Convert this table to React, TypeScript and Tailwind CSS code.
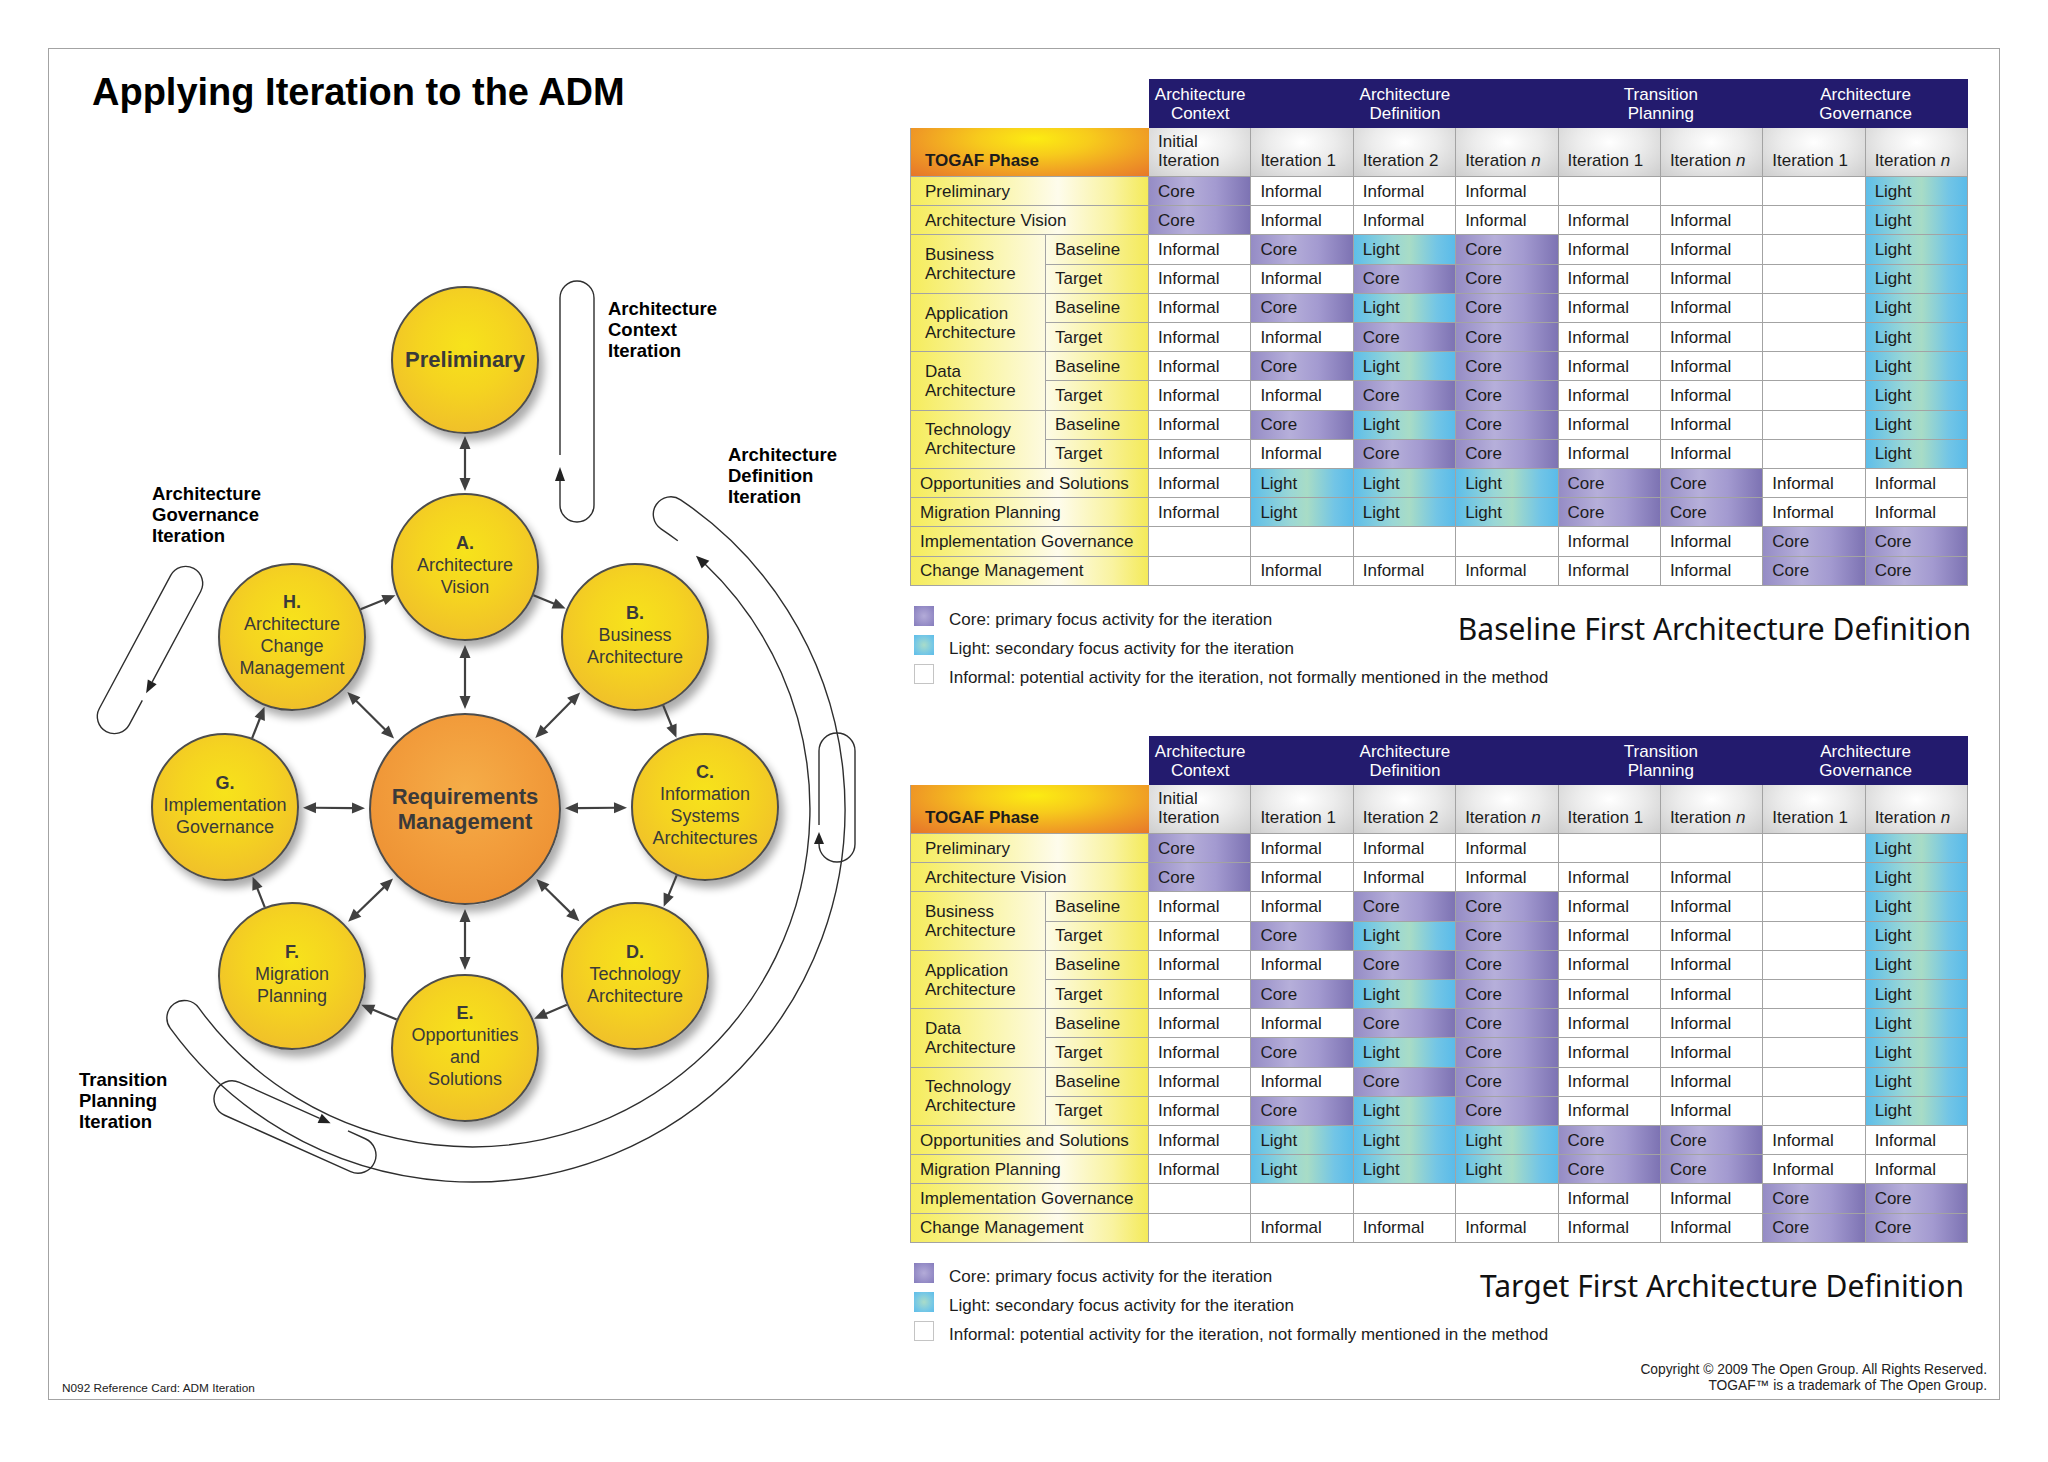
import React from 'react';

type V = 'C' | 'L' | 'I' | '';

const CELL_BG: Record<V, string> = {
  C: 'bg-[linear-gradient(to_right,#958cc5_0%,#b6afda_38%,#a39ad0_66%,#7d73b3_100%)]',
  L: 'bg-[linear-gradient(to_right,#5ebee9_0%,#9ad7d6_38%,#a8dcc6_55%,#72c5e6_82%,#5abbe9_100%)]',
  I: 'bg-white',
  '': 'bg-white',
};
const CELL_TEXT: Record<V, string> = { C: 'Core', L: 'Light', I: 'Informal', '': '' };

const archBase: V[] = ['I', 'C', 'L', 'C', 'I', 'I', '', 'L'];
const archTarget: V[] = ['I', 'I', 'C', 'C', 'I', 'I', '', 'L'];

const head2: V[][] = [
  ['C', 'I', 'I', 'I', '', '', '', 'L'],
  ['C', 'I', 'I', 'I', 'I', 'I', '', 'L'],
];
const tail4: V[][] = [
  ['I', 'L', 'L', 'L', 'C', 'C', 'I', 'I'],
  ['I', 'L', 'L', 'L', 'C', 'C', 'I', 'I'],
  ['', '', '', '', 'I', 'I', 'C', 'C'],
  ['', 'I', 'I', 'I', 'I', 'I', 'C', 'C'],
];

// baseline first: baseline rows get the early core
const baselineFirst: V[][] = [
  ...head2,
  archBase, archTarget, archBase, archTarget, archBase, archTarget, archBase, archTarget,
  ...tail4,
];
// target first: the other way round
const targetFirst: V[][] = [
  ...head2,
  archTarget, archBase, archTarget, archBase, archTarget, archBase, archTarget, archBase,
  ...tail4,
];

type Phase =
  | { kind: 'single'; name: string; pl: string }
  | { kind: 'group'; name: [string, string] };

const PHASES: Phase[] = [
  { kind: 'single', name: 'Preliminary', pl: 'pl-[14px]' },
  { kind: 'single', name: 'Architecture Vision', pl: 'pl-[14px]' },
  { kind: 'group', name: ['Business', 'Architecture'] },
  { kind: 'group', name: ['Application', 'Architecture'] },
  { kind: 'group', name: ['Data', 'Architecture'] },
  { kind: 'group', name: ['Technology', 'Architecture'] },
  { kind: 'single', name: 'Opportunities and Solutions', pl: 'pl-[9px]' },
  { kind: 'single', name: 'Migration Planning', pl: 'pl-[9px]' },
  { kind: 'single', name: 'Implementation Governance', pl: 'pl-[9px]' },
  { kind: 'single', name: 'Change Management', pl: 'pl-[9px]' },
];

const HEAD = [
  { a: 'Architecture', b: 'Context', span: 'col-span-1' },
  { a: 'Architecture', b: 'Definition', span: 'col-span-3' },
  { a: 'Transition', b: 'Planning', span: 'col-span-2' },
  { a: 'Architecture', b: 'Governance', span: 'col-span-2' },
];

const ITER: React.ReactNode[] = [
  <>Initial<br />Iteration</>,
  'Iteration 1',
  'Iteration 2',
  <>Iteration <i>n</i></>,
  'Iteration 1',
  <>Iteration <i>n</i></>,
  'Iteration 1',
  <>Iteration <i>n</i></>,
];

const LINE = 'border-[#a3a3a3]';

function Matrix({ values }: { values: V[][] }) {
  const out: React.ReactNode[] = [];
  out.push(<div key="blank" className="col-span-2" />);
  HEAD.forEach((h, i) => {
    out.push(
      <div
        key={'h' + i}
        className={`${h.span} bg-[#231b6e] text-white flex flex-col items-center justify-center text-center`}
      >
        <span>{h.a}</span>
        <span>{h.b}</span>
      </div>
    );
  });
  out.push(
    <div
      key="togaf"
      className={`col-span-2 border-l border-b ${LINE} flex items-end pb-[6px] pl-[14px] font-bold bg-[radial-gradient(ellipse_at_52%_22%,#fcec12_0%,#f7cb1c_32%,#ef9a25_68%,#e6742a_100%)]`}
    >
      TOGAF Phase
    </div>
  );
  ITER.forEach((it, i) => {
    out.push(
      <div
        key={'it' + i}
        className={`border-r border-b ${LINE} flex items-end pb-[6px] pl-[9px] bg-[radial-gradient(ellipse_at_50%_30%,#ffffff_0%,#ececec_45%,#cdcdcd_100%)]`}
      >
        <span>{it}</span>
      </div>
    );
  });

  const valueCells = (row: V[], r: number) =>
    row.forEach((v, c) => {
      out.push(
        <div key={`v${r}-${c}`} className={`border-r border-b ${LINE} flex items-center pl-[9px] ${CELL_BG[v]}`}>
          {CELL_TEXT[v]}
        </div>
      );
    });

  let r = 0;
  PHASES.forEach((p, pi) => {
    if (p.kind === 'single') {
      out.push(
        <div
          key={'p' + pi}
          className={`col-span-2 border-l border-r border-b ${LINE} flex items-center ${p.pl} bg-[linear-gradient(to_right,#f5ec5c_0%,#faf5a8_35%,#fefcec_62%,#f9f3a0_85%,#f4ea5a_100%)]`}
        >
          {p.name}
        </div>
      );
      valueCells(values[r], r);
      r++;
    } else {
      out.push(
        <div
          key={'p' + pi}
          className={`row-span-2 border-l border-r border-b ${LINE} flex flex-col justify-center pl-[14px] bg-[linear-gradient(to_right,#f5ec5c_0%,#faf5a6_55%,#fdfae0_100%)]`}
        >
          <span>{p.name[0]}</span>
          <span>{p.name[1]}</span>
        </div>
      );
      ['Baseline', 'Target'].forEach((s) => {
        out.push(
          <div
            key={`s${r}`}
            className={`border-r border-b ${LINE} flex items-center pl-[9px] bg-[linear-gradient(to_right,#fdfbe6_0%,#f9f3a4_50%,#f4ea5a_100%)]`}
          >
            {s}
          </div>
        );
        valueCells(values[r], r);
        r++;
      });
    }
  });

  return (
    <div className="grid grid-cols-[136px_103px_repeat(8,102.375px)] grid-rows-[49px_49px_repeat(14,29.214px)] w-[1058px] text-[17px] leading-[19px] text-[#1c1c1c]">
      {out}
    </div>
  );
}

const LEGEND = [
  {
    sq: 'bg-[radial-gradient(circle,#b3abd8_0%,#938ac5_70%,#857cbb_100%)]',
    text: 'Core: primary focus activity for the iteration',
  },
  {
    sq: 'bg-[radial-gradient(circle,#a9dcc9_0%,#74c7e6_65%,#5dbde9_100%)]',
    text: 'Light: secondary focus activity for the iteration',
  },
  {
    sq: 'bg-white border border-[#c4c4c4]',
    text: 'Informal: potential activity for the iteration, not formally mentioned in the method',
  },
];

function LegendRow({ i }: { i: number }) {
  return (
    <div className="h-[29px] flex items-start gap-[15px] pl-[4px]">
      <div className={`w-[20px] h-[20px] shrink-0 ${LEGEND[i].sq}`} />
      <div className="pt-[4px] text-[17px] leading-[20px] text-[#1c1c1c] whitespace-nowrap">{LEGEND[i].text}</div>
    </div>
  );
}

function Section({ values, caption, capClass }: { values: V[][]; caption: string; capClass: string }) {
  return (
    <div className="flex flex-col w-[1058px]">
      <Matrix values={values} />
      <div className="mt-[20px] flex flex-col">
        <div className="h-[29px] flex justify-between items-start">
          <LegendRow i={0} />
          <div className={`font-['Noto_Sans',sans-serif] text-[30px] leading-[36px] mt-[5px] text-[#111] whitespace-nowrap ${capClass}`}>
            {caption}
          </div>
        </div>
        <LegendRow i={1} />
        <LegendRow i={2} />
      </div>
    </div>
  );
}

/* ---------- ADM diagram ---------- */

type Node = { x: number; y: number; r: number };
const N: Record<string, Node> = {
  P: { x: 465, y: 360, r: 74 },
  A: { x: 465, y: 567, r: 74 },
  B: { x: 635, y: 637, r: 74 },
  C: { x: 705, y: 807, r: 74 },
  D: { x: 635, y: 976, r: 74 },
  E: { x: 465, y: 1048, r: 74 },
  F: { x: 292, y: 976, r: 74 },
  G: { x: 225, y: 807, r: 74 },
  H: { x: 292, y: 637, r: 74 },
  R: { x: 465, y: 809, r: 96 },
};

const head = (x: number, y: number, ux: number, uy: number, len = 13, hw = 5.5) => {
  const bx = x - ux * len;
  const by = y - uy * len;
  return `${x},${y} ${bx - uy * hw},${by + ux * hw} ${bx + uy * hw},${by - ux * hw}`;
};

function Arrow({ from, to, both = false, gap = 1 }: { from: string; to: string; both?: boolean; gap?: number }) {
  const a = N[from];
  const b = N[to];
  const dx = b.x - a.x;
  const dy = b.y - a.y;
  const d = Math.hypot(dx, dy);
  const ux = dx / d;
  const uy = dy / d;
  const s = both ? gap : 0;
  const x1 = a.x + ux * (a.r + s);
  const y1 = a.y + uy * (a.r + s);
  const x2 = b.x - ux * (b.r + gap);
  const y2 = b.y - uy * (b.r + gap);
  const lx1 = both ? x1 + ux * 11 : x1;
  const ly1 = both ? y1 + uy * 11 : y1;
  return (
    <g>
      <line x1={lx1} y1={ly1} x2={x2 - ux * 11} y2={y2 - uy * 11} stroke="#404040" strokeWidth={2.2} />
      <polygon points={head(x2, y2, ux, uy)} fill="#404040" />
      {both && <polygon points={head(x1, y1, -ux, -uy)} fill="#404040" />}
    </g>
  );
}

const CX = 472;
const CY = 809;
const RI = 338;
const RO = 373;
const CAP = (RO - RI) / 2;
const pol = (r: number, deg: number) => {
  const a = (deg * Math.PI) / 180;
  return [CX + r * Math.cos(a), CY + r * Math.sin(a)];
};
const P = (p: number[]) => `${p[0].toFixed(1)} ${p[1].toFixed(1)}`;

const bigLoop = [
  `M ${P(pol(RI, -46.5))}`,
  `A ${RI} ${RI} 0 1 1 ${P(pol(RI, 144))}`,
  `A ${CAP} ${CAP} 0 0 0 ${P(pol(RO, 144))}`,
  `A ${RO} ${RO} 0 1 0 ${P(pol(RO, -56))}`,
  `A ${CAP} ${CAP} 0 0 0 ${P(pol(RI, -56))}`,
  `A ${RI} ${RI} 0 0 1 ${P(pol(RI, -52.5))}`,
].join(' ');

const loopHead = (() => {
  const tip = pol(RI, -48.5);
  const base = pol(RI, -46.3);
  const a = (-46.3 * Math.PI) / 180;
  const ex = Math.cos(a);
  const ey = Math.sin(a);
  return `${tip[0]},${tip[1]} ${base[0] + ex * 5.5},${base[1] + ey * 5.5} ${base[0] - ex * 5.5},${base[1] - ey * 5.5}`;
})();

function Bubble({
  pos,
  letter,
  lines,
  kind = 'phase',
}: {
  pos: string;
  letter?: string;
  lines: string[];
  kind?: 'phase' | 'prelim' | 'req';
}) {
  const base =
    'absolute rounded-full border-2 border-[#4d4d4d] flex flex-col items-center justify-center text-center text-[#3a3a3a] shadow-[5px_7px_8px_rgba(0,0,0,0.33)]';
  const look =
    kind === 'req'
      ? 'w-[192px] h-[192px] bg-[radial-gradient(circle_at_50%_40%,#f5ad48_0%,#f29d3c_45%,#ea8a2f_100%)]'
      : 'w-[148px] h-[148px] bg-[radial-gradient(circle_at_50%_40%,#f7e31b_0%,#f5d420_40%,#f0c02a_78%,#e9b230_100%)]';
  return (
    <div className={`${base} ${look} ${pos}`}>
      {kind === 'req' && (
        <div className="text-[22px] leading-[25px] font-bold">
          {lines.map((l) => (
            <div key={l}>{l}</div>
          ))}
        </div>
      )}
      {kind === 'prelim' && <div className="text-[22px] leading-[26px] font-bold">{lines[0]}</div>}
      {kind === 'phase' && (
        <div className="text-[18px] leading-[22px] pb-[4px]">
          <div className="font-bold">{letter}</div>
          {lines.map((l) => (
            <div key={l}>{l}</div>
          ))}
        </div>
      )}
    </div>
  );
}

function Diagram() {
  return (
    <div className="relative w-[861px] h-[1240px]">
      <Bubble pos="left-[342px] top-[175px]" kind="prelim" lines={['Preliminary']} />
      <Bubble pos="left-[342px] top-[382px]" letter="A." lines={['Architecture', 'Vision']} />
      <Bubble pos="left-[512px] top-[452px]" letter="B." lines={['Business', 'Architecture']} />
      <Bubble pos="left-[582px] top-[622px]" letter="C." lines={['Information', 'Systems', 'Architectures']} />
      <Bubble pos="left-[512px] top-[791px]" letter="D." lines={['Technology', 'Architecture']} />
      <Bubble pos="left-[342px] top-[863px]" letter="E." lines={['Opportunities', 'and', 'Solutions']} />
      <Bubble pos="left-[169px] top-[791px]" letter="F." lines={['Migration', 'Planning']} />
      <Bubble pos="left-[102px] top-[622px]" letter="G." lines={['Implementation', 'Governance']} />
      <Bubble pos="left-[169px] top-[452px]" letter="H." lines={['Architecture', 'Change', 'Management']} />
      <Bubble pos="left-[320px] top-[602px]" kind="req" lines={['Requirements', 'Management']} />

      <div className="absolute left-[559px] top-[187px] text-[18.5px] leading-[21px] font-bold text-black">
        Architecture<br />Context<br />Iteration
      </div>
      <div className="absolute left-[679px] top-[333px] text-[18.5px] leading-[21px] font-bold text-black">
        Architecture<br />Definition<br />Iteration
      </div>
      <div className="absolute left-[103px] top-[372px] text-[18.5px] leading-[21px] font-bold text-black">
        Architecture<br />Governance<br />Iteration
      </div>
      <div className="absolute left-[30px] top-[958px] text-[18.5px] leading-[21px] font-bold text-black">
        Transition<br />Planning<br />Iteration
      </div>

      <svg
        className="absolute left-0 top-0 pointer-events-none"
        width="861"
        height="1240"
        viewBox="49 111 861 1240"
      >
        <g fill="none" stroke="#2e2e2e" strokeWidth={1.4}>
          <path d="M 560 455 L 560 298 A 17 17 0 0 1 594 298 L 594 505 A 17 17 0 0 1 560 505 L 560 481" />
          <path d="M 819 825 L 819 751 A 18 18 0 0 1 855 751 L 855 844 A 18 18 0 0 1 819 844" />
          <path d={bigLoop} />
          <g transform="translate(150 650) rotate(28.2)">
            <path d="M 17 48 L 17 75.5 A 17 17 0 0 1 -17 75.5 L -17 -75.5 A 17 17 0 0 1 17 -75.5 L 17 27" />
          </g>
          <g transform="translate(295 1127) rotate(24.1)">
            <path d="M 50 -18 L 69 -18 A 18 18 0 0 1 69 18 L -69 18 A 18 18 0 0 1 -69 -18 L 19 -18" />
          </g>
        </g>
        <g fill="#222">
          <polygon points="560,467 555,481 565,481" />
          <polygon points="819,832 814,844 824,844" />
          <polygon points={loopHead} />
          <g transform="translate(150 650) rotate(28.2)">
            <polygon points="17,40 12,27 22,27" />
          </g>
          <g transform="translate(295 1127) rotate(24.1)">
            <polygon points="31,-18 19,-23 19,-13" />
          </g>
        </g>

        <Arrow from="P" to="A" both gap={2} />
        {['A', 'B', 'C', 'D', 'E', 'F', 'G', 'H'].map((k) => (
          <Arrow key={'r' + k} from="R" to={k} both gap={4} />
        ))}
        <Arrow from="A" to="B" />
        <Arrow from="B" to="C" />
        <Arrow from="C" to="D" />
        <Arrow from="D" to="E" />
        <Arrow from="E" to="F" />
        <Arrow from="F" to="G" />
        <Arrow from="G" to="H" />
        <Arrow from="H" to="A" />
      </svg>
    </div>
  );
}

export default function App() {
  return (
    <div className="w-[2048px] h-[1462px] bg-white pt-[48px] pl-[48px] font-['Liberation_Sans',Arial,sans-serif] text-black">
      <div className="w-[1952px] h-[1352px] border border-[#a3a3a3] flex">
        <div className="w-[861px] flex flex-col">
          <h1 className="pl-[43px] pt-[24px] text-[38px] leading-[38px] font-bold text-black">
            Applying Iteration to the ADM
          </h1>
          <Diagram />
          <div className="mt-auto pl-[13px] pb-[4px] text-[11.8px] leading-[14px] text-[#222]">
            N092 Reference Card: ADM Iteration
          </div>
        </div>

        <div className="flex-1 flex flex-col pt-[30px]">
          <div className="h-[657px]">
            <Section values={baselineFirst} caption="Baseline First Architecture Definition" capClass="-mr-[3px]" />
          </div>
          <Section values={targetFirst} caption="Target First Architecture Definition" capClass="mr-[4px]" />
          <div className="mt-auto self-end pr-[12px] pb-[5px] text-right text-[13.8px] leading-[16px] text-[#222]">
            Copyright © 2009 The Open Group. All Rights Reserved.
            <br />
            TOGAF™ is a trademark of The Open Group.
          </div>
        </div>
      </div>
    </div>
  );
}
